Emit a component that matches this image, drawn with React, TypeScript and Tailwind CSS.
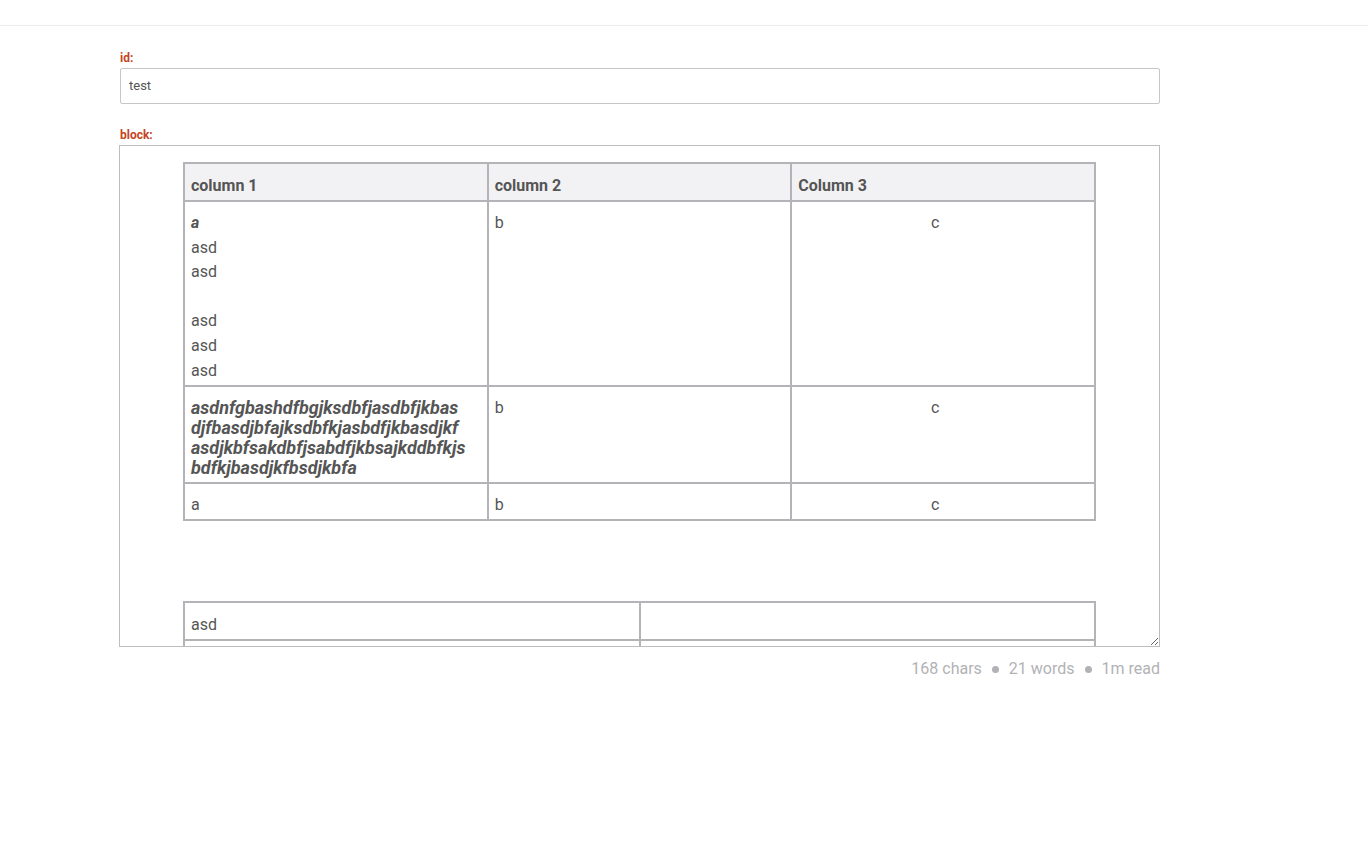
import React from "react";

const cellBase =
  "border-2 border-[#b4b4b8] align-top pl-[6px] pr-[6px] pt-[9px] pb-[2px] leading-6";

export default function App() {
  return (
    <div className="min-h-screen bg-white text-[#555555]" style={{ fontFamily: "Roboto, 'Liberation Sans', sans-serif" }}>
      <div className="h-[26px] border-b border-[#ebebeb]" />
      <div className="ml-[120px] w-[1040px] pt-[24px]">
        <div className="text-[12px] font-bold leading-[14px] text-[#c4451f] translate-y-px">id:</div>
        <div className="mt-[4px] h-[36px] rounded-[2px] border border-[#c6c6c6] px-[8px] flex items-center text-[13px] text-[#555]">
          test
        </div>
        <div className="mt-[23px] text-[12px] font-bold leading-[14px] text-[#c4451f] translate-y-px">block:</div>
        <div className="mt-[4px] -ml-px h-[502px] w-[1041px] resize overflow-hidden border border-[#bdbdbd] px-[63px] pt-[16px] text-[16px]">
          <table className="w-full table-fixed border-collapse">
            <colgroup>
              <col className="w-1/3" />
              <col className="w-1/3" />
              <col className="w-1/3" />
            </colgroup>
            <thead>
              <tr className="bg-[#f2f2f4]">
                <th className={`${cellBase} pt-[10px] pb-[1px] text-left font-bold`}>column 1</th>
                <th className={`${cellBase} pt-[10px] pb-[1px] text-left font-bold`}>column 2</th>
                <th className={`${cellBase} pt-[10px] pb-[1px] text-left font-bold`}>Column 3</th>
              </tr>
            </thead>
            <tbody>
              <tr>
                <td className={`${cellBase} pt-[9px] pb-0`}>
                  <div className="leading-[24.6px] font-bold italic">a</div>
                  <div className="leading-[24.6px]">asd</div>
                  <div className="leading-[24.6px]">asd</div>
                  <div className="h-[24.6px]" />
                  <div className="leading-[24.6px]">asd</div>
                  <div className="leading-[24.6px]">asd</div>
                  <div className="leading-[24.6px]">asd</div>
                </td>
                <td className={`${cellBase} pt-[9px]`}>b</td>
                <td className={`${cellBase} pt-[9px] text-center pr-[22px]`}>c</td>
              </tr>
              <tr>
                <td className={`${cellBase} pt-[11px] pb-[4px]`}>
                  <div className="font-bold italic leading-[20px] text-[18px] whitespace-nowrap">
                    asdnfgbashdfbgjksdbfjasdbfjkbas
                    <br />
                    djfbasdjbfajksdbfkjasbdfjkbasdjkf
                    <br />
                    asdjkbfsakdbfjsabdfjkbsajkddbfkjs
                    <br />
                    bdfkjbasdjkfbsdjkbfa
                  </div>
                </td>
                <td className={`${cellBase} pt-[9px]`}>b</td>
                <td className={`${cellBase} pt-[9px] text-center pr-[22px]`}>c</td>
              </tr>
              <tr>
                <td className={cellBase}>a</td>
                <td className={cellBase}>b</td>
                <td className={`${cellBase} text-center pr-[22px]`}>c</td>
              </tr>
            </tbody>
          </table>
          <div className="h-[80px]" />
          <table className="w-full table-fixed border-collapse">
            <colgroup>
              <col className="w-1/2" />
              <col className="w-1/2" />
            </colgroup>
            <tbody>
              <tr>
                <td className={`${cellBase} pt-[10px] pb-[1px]`}>asd</td>
                <td className={`${cellBase} pt-[10px] pb-[1px]`}>&nbsp;</td>
              </tr>
              <tr>
                <td className={cellBase}>&nbsp;</td>
                <td className={cellBase}>&nbsp;</td>
              </tr>
            </tbody>
          </table>
        </div>
        <div className="mt-[10px] flex items-center justify-end text-[16px] leading-6 text-[#b2b2b6]">
          <span>168 chars</span>
          <span className="mx-[10px] inline-block h-[7px] w-[7px] rounded-full bg-[#b2b2b6]" />
          <span>21 words</span>
          <span className="mx-[10px] inline-block h-[7px] w-[7px] rounded-full bg-[#b2b2b6]" />
          <span>1m read</span>
        </div>
      </div>
    </div>
  );
}
